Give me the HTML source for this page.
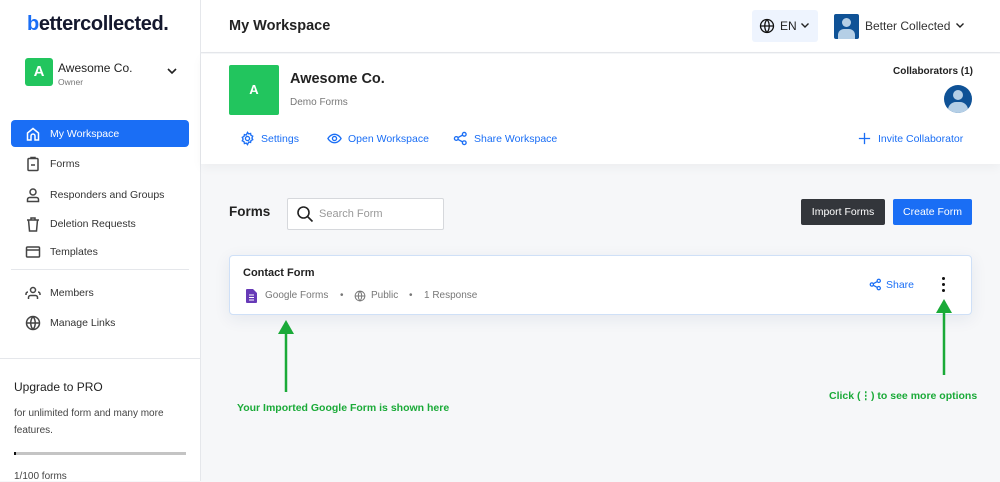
<!DOCTYPE html>
<html><head><meta charset="utf-8"><style>
*{box-sizing:border-box;margin:0;padding:0}
body{width:1000px;height:481px;overflow:hidden;font-family:"Liberation Sans",sans-serif;background:#f6f7f9;position:relative;color:#111}
.abs{position:absolute}
.side{left:0;top:0;width:201px;height:481px;background:#fff;border-right:1px solid #e5e7eb}
.nav{position:absolute;left:11px;width:178px;height:27px;display:flex;align-items:center;padding-left:14px;font-size:10.5px;color:#333}
.nav svg{width:16px;height:16px;margin-right:9px;fill:none;stroke:#444;stroke-width:1.5}
.lnk{position:absolute;top:131px;font-size:10.5px;color:#1a6ef5;display:flex;align-items:center}
.lnk svg{width:15px;height:15px;margin-right:6px;fill:none;stroke:#1a6ef5;stroke-width:1.4}
</style></head><body>
<div class="abs side">
 <div class="abs" style="left:27px;top:13px;font-size:20px;font-weight:bold;color:#14182e;letter-spacing:-0.4px"><span style="color:#1a6ef5">b</span>ettercollected.</div>
 <div class="abs" style="left:25px;top:58px;width:28px;height:28px;background:#22c55e;border-radius:3px;color:#fff;font-weight:bold;font-size:15px;text-align:center;line-height:28px">A</div>
 <div class="abs" style="left:58px;top:61px;font-size:12px;color:#222">Awesome Co.</div>
 <div class="abs" style="left:58px;top:77px;font-size:8.5px;color:#777">Owner</div>
 <svg class="abs" style="left:166px;top:67px" width="12" height="8" viewBox="0 0 12 8"><path d="M2 2l4 4 4-4" stroke="#222" stroke-width="1.6" fill="none"/></svg>
 <div class="nav" style="top:120px;background:#1a6ef5;color:#fff;border-radius:4px"><svg viewBox="0 0 16 16" style="stroke:#fff"><path d="M2.5 14V7L8 2.5 13.5 7V14H10V10a2 2 0 0 0-4 0v4z"/></svg>My Workspace</div>
 <div class="nav" style="top:150px"><svg viewBox="0 0 16 16"><rect x="3" y="2.5" width="10" height="12" rx="1"/><path d="M6 2.5V1.5h4v1M6 9h4"/></svg>Forms</div>
 <div class="nav" style="top:181px"><svg viewBox="0 0 16 16"><circle cx="8" cy="5" r="3"/><path d="M2.5 14.5v-2a2 2 0 0 1 2-2h7a2 2 0 0 1 2 2v2z"/></svg>Responders and Groups</div>
 <div class="nav" style="top:210px"><svg viewBox="0 0 16 16"><path d="M2 4h12M6 4V2h4v2M3.5 4l1 11h7l1-11"/></svg>Deletion Requests</div>
 <div class="nav" style="top:238px"><svg viewBox="0 0 16 16"><rect x="1.5" y="3" width="13" height="10" rx="1"/><path d="M1.5 6h13"/></svg>Templates</div>
 <div class="abs" style="left:11px;top:269px;width:178px;height:1px;background:#e5e7eb"></div>
 <div class="nav" style="top:279px"><svg viewBox="0 0 16 16"><circle cx="8" cy="5" r="2.5"/><path d="M3.5 14v-1.5a2 2 0 0 1 2-2h5a2 2 0 0 1 2 2V14M1 10v-1a2 2 0 0 1 2-2M15 10v-1a2 2 0 0 0-2-2"/></svg>Members</div>
 <div class="nav" style="top:309px"><svg viewBox="0 0 16 16"><circle cx="8" cy="8" r="6.5"/><path d="M1.5 8h13M8 1.5c-3 3.5-3 9.5 0 13M8 1.5c3 3.5 3 9.5 0 13"/></svg>Manage Links</div>
 <div class="abs" style="left:0;top:358px;width:200px;height:1px;background:#e5e7eb"></div>
 <div class="abs" style="left:14px;top:380px;font-size:12px;color:#222">Upgrade to PRO</div>
 <div class="abs" style="left:14px;top:405px;font-size:10px;color:#444;line-height:17px;width:180px">for unlimited form and many more features.</div>
 <div class="abs" style="left:14px;top:452px;width:172px;height:3px;background:#c4c4c4"></div>
 <div class="abs" style="left:14px;top:452px;width:2px;height:3px;background:#111"></div>
 <div class="abs" style="left:14px;top:471px;font-size:10px;color:#444">1/100 forms</div>
</div>
<div class="abs" style="left:201px;top:0;width:799px;height:53px;background:#fff;border-bottom:1px solid #e5e7eb"></div>
<div class="abs" style="left:229px;top:18px;font-size:14.5px;font-weight:bold;color:#222">My Workspace</div>
<div class="abs" style="left:752px;top:10px;width:66px;height:32px;background:#eef4fe;border-radius:3px"></div>
<svg class="abs" style="left:759px;top:18px" width="16" height="16" viewBox="0 0 16 16" fill="none" stroke="#111" stroke-width="1.3"><circle cx="8" cy="8" r="6.5"/><path d="M1.5 8h13M8 1.5c-3 3.5-3 9.5 0 13M8 1.5c3 3.5 3 9.5 0 13"/></svg>
<div class="abs" style="left:780px;top:19px;font-size:12px;color:#222">EN</div>
<svg class="abs" style="left:800px;top:22px" width="10" height="7" viewBox="0 0 10 7"><path d="M1.5 1.5l3.5 3.5 3.5-3.5" stroke="#222" stroke-width="1.4" fill="none"/></svg>
<div class="abs" style="left:834px;top:14px;width:25px;height:25px;background:#0f5296;border-radius:2px;overflow:hidden"><div class="abs" style="left:8px;top:4px;width:9px;height:9px;border-radius:50%;background:#b5cfe6"></div><div class="abs" style="left:4px;top:15px;width:17px;height:14px;border-radius:6px 6px 0 0;background:#b5cfe6"></div></div>
<div class="abs" style="left:865px;top:19px;font-size:12px;color:#333">Better Collected</div>
<svg class="abs" style="left:955px;top:22px" width="10" height="7" viewBox="0 0 10 7"><path d="M1.5 1.5l3.5 3.5 3.5-3.5" stroke="#222" stroke-width="1.4" fill="none"/></svg>
<div class="abs" style="left:201px;top:54px;width:799px;height:110px;background:#fff;box-shadow:0 4px 10px rgba(0,0,0,0.04)"></div>
<div class="abs" style="left:229px;top:65px;width:50px;height:50px;background:#22c55e;border-radius:2px;color:#fff;font-weight:bold;font-size:13px;text-align:center;line-height:50px">A</div>
<div class="abs" style="left:290px;top:71px;font-size:14.5px;font-weight:bold;color:#222">Awesome Co.</div>
<div class="abs" style="left:290px;top:97px;font-size:10px;color:#777">Demo Forms</div>
<div class="lnk" style="left:240px"><svg viewBox="0 0 16 16"><circle cx="8" cy="8" r="2.2"/><path d="M8 1.5l1.3 1.6 2-.5.4 2 1.9.9-.9 1.9.9 1.9-1.9.9-.4 2-2-.5L8 14.5l-1.3-1.6-2 .5-.4-2-1.9-.9.9-1.9-.9-1.9 1.9-.9.4-2 2 .5z"/></svg>Settings</div>
<div class="lnk" style="left:327px"><svg viewBox="0 0 16 16"><path d="M1 8s2.5-4.5 7-4.5S15 8 15 8s-2.5 4.5-7 4.5S1 8 1 8z"/><circle cx="8" cy="8" r="2.2"/></svg>Open Workspace</div>
<div class="lnk" style="left:453px"><svg viewBox="0 0 16 16"><circle cx="3.5" cy="8" r="2"/><circle cx="12" cy="3.5" r="2"/><circle cx="12" cy="12.5" r="2"/><path d="M5.3 7l4.9-2.6M5.3 9l4.9 2.6"/></svg>Share Workspace</div>
<div class="abs" style="left:893px;top:66px;font-size:10px;font-weight:bold;color:#222">Collaborators (1)</div>
<div class="abs" style="left:944px;top:85px;width:28px;height:28px;border-radius:50%;background:#0f5296;overflow:hidden"><div class="abs" style="left:9px;top:5px;width:10px;height:10px;border-radius:50%;background:#b5cfe6"></div><div class="abs" style="left:4px;top:17px;width:20px;height:14px;border-radius:8px 8px 0 0;background:#b5cfe6"></div></div>
<div class="lnk" style="left:857px;top:131px"><svg viewBox="0 0 16 16"><path d="M8 2v12M2 8h12"/></svg>Invite Collaborator</div>
<div class="abs" style="left:229px;top:204px;font-size:13.5px;font-weight:bold;color:#222">Forms</div>
<div class="abs" style="left:287px;top:198px;width:157px;height:32px;background:#fff;border:1px solid #d6d8dc;border-radius:2px"></div>
<svg class="abs" style="left:296px;top:205px" width="18" height="18" viewBox="0 0 18 18" fill="none" stroke="#222" stroke-width="1.6"><circle cx="7.5" cy="7.5" r="5.5"/><path d="M11.5 11.5l5 5"/></svg>
<div class="abs" style="left:319px;top:208px;font-size:11px;color:#999">Search Form</div>
<div class="abs" style="left:801px;top:199px;width:84px;height:26px;background:#33363b;border-radius:2px;color:#fff;font-size:10.5px;text-align:center;line-height:26px">Import Forms</div>
<div class="abs" style="left:893px;top:199px;width:79px;height:26px;background:#1a6ef5;border-radius:2px;color:#fff;font-size:10.5px;text-align:center;line-height:26px">Create Form</div>
<div class="abs" style="left:229px;top:255px;width:743px;height:60px;background:#fff;border:1px solid #cfe0f7;border-radius:4px;box-shadow:0 4px 16px rgba(30,50,100,0.08)"></div>
<div class="abs" style="left:243px;top:267px;font-size:11px;font-weight:bold;color:#222">Contact Form</div>
<svg class="abs" style="left:246px;top:289px" width="11" height="14" viewBox="0 0 11 14"><path d="M1 0h6l4 4v9a1 1 0 0 1-1 1H1a1 1 0 0 1-1-1V1a1 1 0 0 1 1-1z" fill="#673ab7"/><path d="M3 6h5M3 8.5h5M3 11h5" stroke="#fff" stroke-width="1"/></svg>
<div class="abs" style="left:265px;top:290px;font-size:10px;color:#777">Google Forms</div>
<div class="abs" style="left:340px;top:290px;font-size:10px;color:#777">•</div>
<svg class="abs" style="left:354px;top:290px" width="12" height="12" viewBox="0 0 16 16" fill="none" stroke="#777" stroke-width="1.3"><circle cx="8" cy="8" r="6.5"/><path d="M1.5 8h13M8 1.5c-3 3.5-3 9.5 0 13M8 1.5c3 3.5 3 9.5 0 13"/></svg>
<div class="abs" style="left:371px;top:290px;font-size:10px;color:#777">Public</div>
<div class="abs" style="left:409px;top:290px;font-size:10px;color:#777">•</div>
<div class="abs" style="left:424px;top:290px;font-size:10px;color:#777">1 Response</div>
<svg class="abs" style="left:869px;top:278px" width="13" height="13" viewBox="0 0 16 16" fill="none" stroke="#1a6ef5" stroke-width="1.5"><circle cx="3.5" cy="8" r="2"/><circle cx="12" cy="3.5" r="2"/><circle cx="12" cy="12.5" r="2"/><path d="M5.3 7l4.9-2.6M5.3 9l4.9 2.6"/></svg>
<div class="abs" style="left:886px;top:279px;font-size:10.5px;color:#1a6ef5">Share</div>
<div class="abs" style="left:942px;top:277px;width:3px;height:3px;border-radius:50%;background:#111;box-shadow:0 6px 0 #111,0 12px 0 #111"></div>
<svg class="abs" style="left:275px;top:318px" width="22" height="76" viewBox="0 0 22 76"><path d="M11 2L3 16h16z" fill="#1aaa38"/><path d="M11 14v60" stroke="#1aaa38" stroke-width="2.5"/></svg>
<svg class="abs" style="left:933px;top:297px" width="22" height="80" viewBox="0 0 22 80"><path d="M11 2L3 16h16z" fill="#1aaa38"/><path d="M11 14v64" stroke="#1aaa38" stroke-width="2.5"/></svg>
<div class="abs" style="left:237px;top:402px;font-size:10.5px;font-weight:bold;color:#1aaa38">Your Imported Google Form is shown here</div>
<div class="abs" style="left:829px;top:390px;font-size:10.5px;font-weight:bold;color:#1aaa38">Click (⋮) to see more options</div>
</body></html>
